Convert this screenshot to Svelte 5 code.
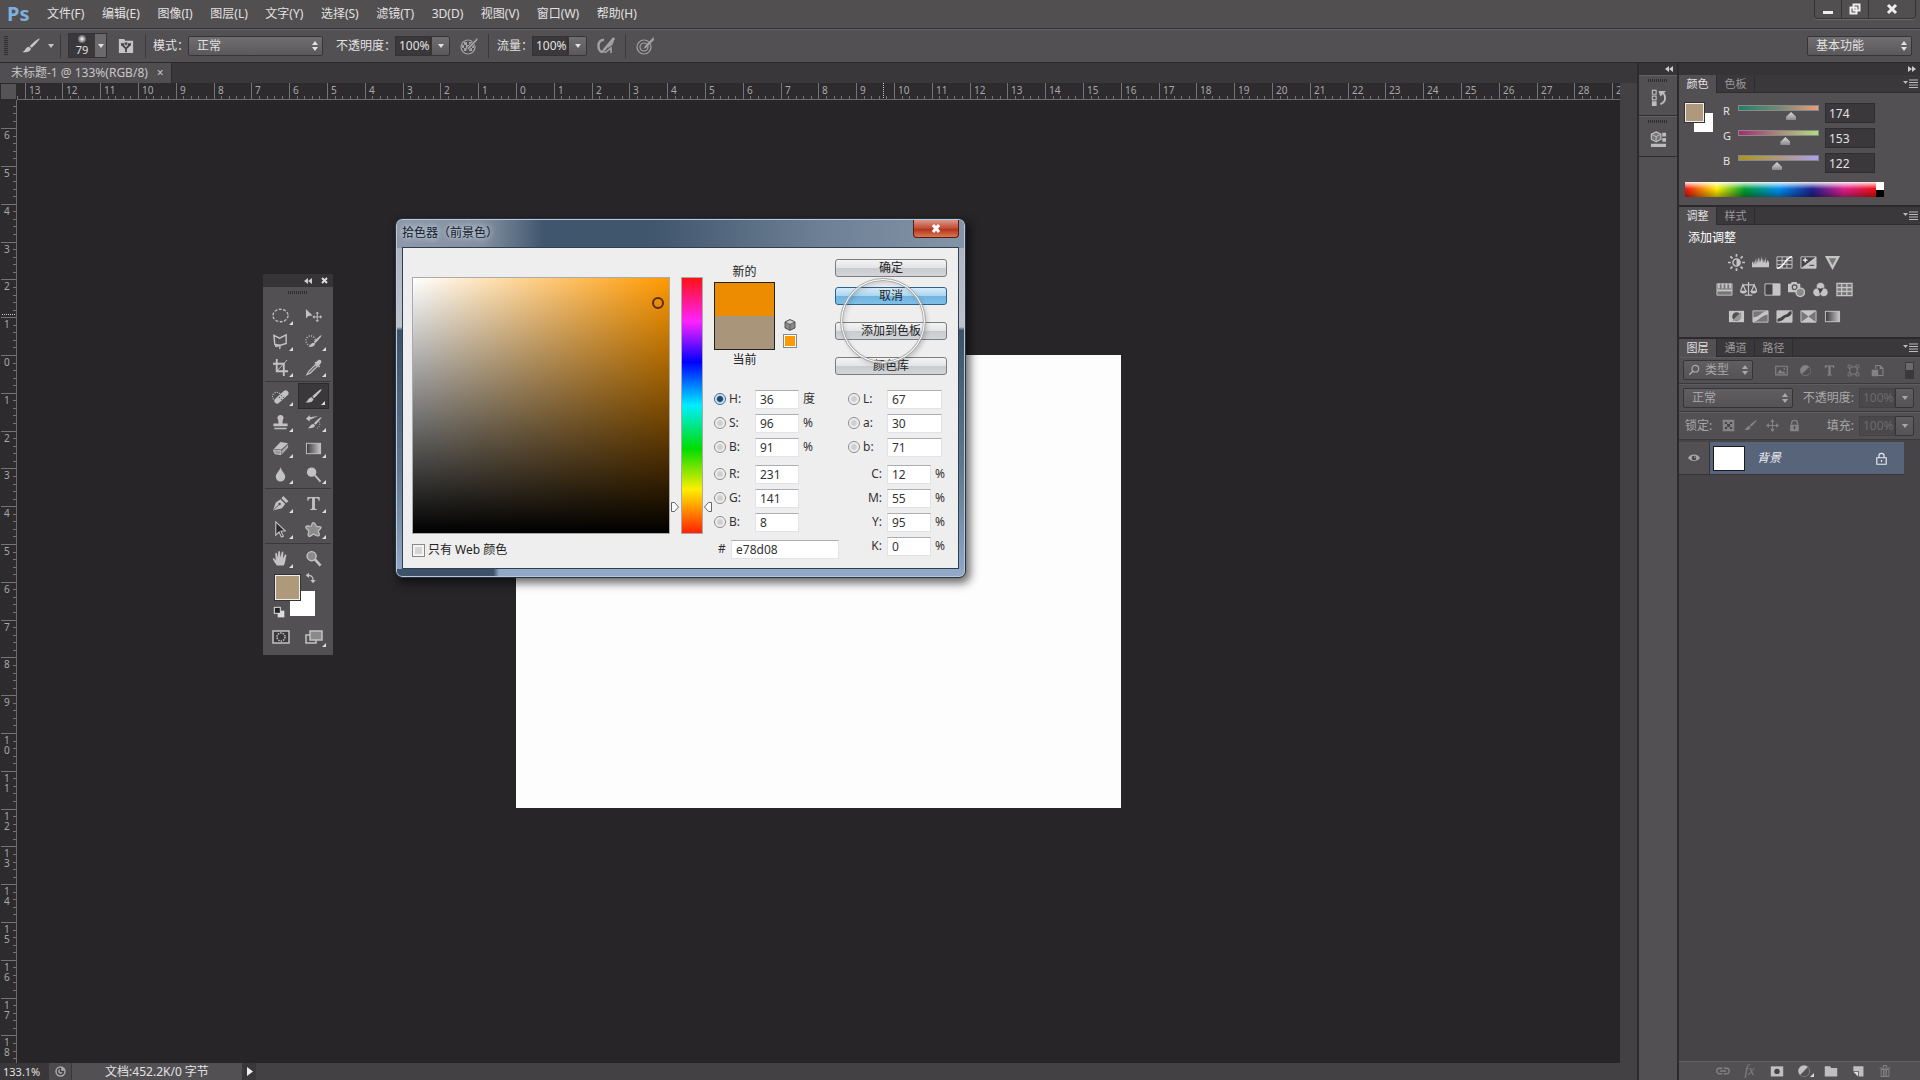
<script>
	const menus = ['文件(F)', '编辑(E)', '图像(I)', '图层(L)', '文字(Y)', '选择(S)', '滤镜(T)', '3D(D)', '视图(V)', '窗口(W)', '帮助(H)'];

	// all icons are drawn on an 18x18 grid
	const icons = {
		ellipse: '<ellipse cx="9" cy="9" rx="8" ry="6.6" fill="none" stroke="currentColor" stroke-width="1.4" stroke-dasharray="3 1.6"/>',
		move: '<path d="M1 2v10l2.6-2.4L8 9z" fill="currentColor"/><path d="M13 6v9M8.500 10.500h9" stroke="currentColor"/><path d="M13 5l-2 2h4zM13 16l-2-2h4zM8 10.500l2-2v4zM18 10.500l-2-2v4z" fill="currentColor"/>',
		lasso: '<path d="M2 2.500l6 3 7-3.500v9l-6 2-6-1zM5 12c-2 .5-1.500 3 .5 2s4-1 2.500 3" fill="none" stroke="currentColor" stroke-width="1.5"/>',
		quick: '<circle cx="6" cy="8" r="5" fill="none" stroke="currentColor" stroke-width="1.3" stroke-dasharray="1.2 1.4"/><path d="M17.500 2.500c.6.6-5 7-6.500 8.200L9.500 9.500C11 7.500 16.500 1.800 17.500 2.500zM8.800 10.200l1.700 1.400c-.6 3-4 3.500-7 3C5.500 14 6 10.500 8.800 10.200z" fill="currentColor"/>',
		crop: '<path d="M5 0v13h12M1 5h11.500v13" fill="none" stroke="currentColor" stroke-width="2"/><path d="M5 13L16 1" stroke="currentColor"/>',
		dropper: '<path d="M11 6L4 13l-2 3.500L5.500 15 13 8z" fill="#6c6a6c" stroke="currentColor" stroke-width="1.2"/><path d="M10 4l5 5 1-1-1.200-1.500C18 4 17.500 2 16.800 1.200 16 .5 14 0 12 3.200L11 3z" fill="currentColor"/>',
		heal: '<circle cx="5" cy="9" r="4.500" fill="none" stroke="currentColor" stroke-width="1.2" stroke-dasharray="1.2 1.4"/><rect x="1" y="6.500" width="18" height="6" rx="3" transform="rotate(-42 10 9.500)" fill="currentColor"/><g fill="#555"><circle cx="10" cy="8" r=".7"/><circle cx="12" cy="10" r=".7"/><circle cx="8" cy="10" r=".7"/><circle cx="10" cy="12" r=".7"/></g>',
		brush: '<path d="M17.500 1.500c.7.7-6 7.800-8 9.300L7.800 9.200C9.500 7 16.500.7 17.500 1.500zM7 9.800l2 1.800c-.6 3.600-4.500 4.200-8.500 3.400C3 14.500 3.500 10 7 9.800z" fill="currentColor"/>',
		stamp: '<path d="M9 1a3 3 0 0 1 2.500 5L11 10h5.500v3h-15v-3H7L6.500 6A3 3 0 0 1 9 1zM2.500 14.500h13v1.600h-13z" fill="currentColor"/>',
		history: '<path d="M17.500 3.500c.5.5-5 7-6.500 8L9.500 10C11 8 16.500 2.800 17.500 3.500zM8.800 10.500l1.800 1.500c-.6 3-4 3.500-8 3C5 14.500 5.500 10.800 8.800 10.500zM1 5l4-4v2.500c4-.5 6-1.500 9-.5-3 0-5 2-9 3v2z" fill="currentColor"/><path d="M15 8c1.500 3 .5 6-3 7.500" fill="none" stroke="currentColor" stroke-dasharray="1 1.400"/>',
		eraser: '<path d="M9 2l8 1.500-7 6.500-8-.5z" fill="currentColor"/><path d="M1.500 10.500l8 .8v4.200l-6.500-1z" fill="#9b9a9b" stroke="currentColor"/><path d="M10.500 11L17 4.500v3.800L10.500 15z" fill="#a9a8a9"/>',
		gradient: '<rect x="1.500" y="3.500" width="15" height="11" fill="url(#fade)" stroke="currentColor"/>',
		blur: '<path d="M9 1c.5 4 5 6.500 5 10.500a5 5 0 0 1-10 0C4 7.500 8.500 5 9 1z" fill="currentColor"/>',
		dodge: '<circle cx="7" cy="6.500" r="5" fill="currentColor"/><path d="M10.500 10l6 6.500" stroke="currentColor" stroke-width="2"/>',
		pen: '<path d="M1 16.500L4 8l5-3.500 5 5L10.500 14z" fill="currentColor"/><path d="M10 3.500l2-2.500 5.500 5.500-2.500 2z" fill="currentColor"/><path d="M1.500 16l6-6" stroke="#525053"/><circle cx="8" cy="9.500" r="1.300" fill="#525053"/>',
		type: '<path d="M2.500 2h13v4h-1c-.4-2-1-2.600-4-2.600v10.400c0 1 .6 1.200 2 1.200v1h-7v-1c1.400 0 2-.2 2-1.200V3.400c-3 0-3.600.6-4 2.600h-1z" fill="currentColor"/>',
		select: '<path d="M4 1v14l3.500-3.300L10 17l2-.9-2.500-5.200L14 10.500z" fill="#2b292b" stroke="currentColor" stroke-width="1.200"/>',
		shape: '<path d="M8 2c3-1 3 2 4 3.500s5-.5 5 1.500-3 2.500-3 4 2.500 3 .5 4.500-4-1.500-5.500-1.500-3 3-5 2 .5-4 0-5.500S0 8 1 6s4 0 5.500-.5S6.500 3 8 2z" fill="#8c8b8c" stroke="currentColor" stroke-width="1.300"/>',
		hand: '<path d="M5 16.500C3.500 13.500 1 11 0.800 9c.8-.8 2 0 3.200 2L3.500 4c0-1.300 1.500-1.300 1.800 0L6.200 8 6.600 2c.2-1.300 1.800-1.300 1.900 0L9 8l1.300-5.500c.4-1.200 2-1 1.800.3L11.500 9l2-3.800c.7-1 2-.4 1.700.7C14 10 14.500 13 12.500 16.500z" fill="currentColor"/>',
		zoom: '<circle cx="7" cy="6.500" r="4.800" fill="#8b8a8b" stroke="currentColor" stroke-width="1.500"/><path d="M10.500 10l6 6.500" stroke="currentColor" stroke-width="2.800"/>',
		swap: '<path d="M5 5c5 0 7 2 7 7" fill="none" stroke="currentColor" stroke-width="1.800"/><path d="M1 5l5-4v8zM12 17l-4-5h8z" fill="currentColor"/>',
		reset: '<rect x="7" y="7" width="10" height="10" fill="#ddd"/><rect x="2" y="2" width="9" height="9" fill="#222" stroke="#ddd" stroke-width="1.500"/>',
		mask: '<rect x="1" y="3" width="16" height="12" fill="#3a383a" stroke="currentColor" stroke-width="1.500"/><circle cx="9" cy="9" r="4" fill="none" stroke="currentColor" stroke-width="1.500" stroke-dasharray="1.500 1"/>',
		screen: '<rect x="1" y="7" width="10" height="8" fill="#525053" stroke="currentColor" stroke-width="1.500"/><rect x="5" y="3" width="12" height="9" fill="#8b8a8b" stroke="currentColor" stroke-width="1.500"/>',
		folder: '<path d="M1 1h6l1 2h9v14H1z" fill="currentColor"/><path d="M9 16V11M9 12L5 8M9 12l4-4" fill="none" stroke="#444244" stroke-width="2"/><path d="M3 6h4v3H4zM7 5h4l-2 4zM11 6h4l-1 3h-3z" fill="#444244"/>',
		pressure: '<circle cx="8" cy="10" r="7" fill="none" stroke="currentColor" stroke-width="1.200"/><path d="M4 5h3v3H4zM9 5h3v3H9zM6 8h3v3H6zM2 8h2v3H2zM4 11h3v3H4zM9 11h3v3H9zM12 8h2v3h-2z" fill="currentColor"/><path d="M17.500 0L8 10l-1.500 3.500 3-1.500L18 3z" fill="currentColor" stroke="#4c4a4c" stroke-width=".8"/>',
		airbrush: '<path d="M7 3C0 2 0 14 5 15" fill="none" stroke="currentColor" stroke-width="2.400"/><path d="M17 1l-2 6-4 3M17 1L5 15h4l5-4v5" fill="none" stroke="currentColor" stroke-width="1.600"/><path d="M17 1L7 13" stroke="currentColor" stroke-width="2.500"/>',
		sizePressure: '<circle cx="8" cy="10" r="7" fill="none" stroke="currentColor" stroke-width="1.200"/><circle cx="8" cy="10" r="4" fill="none" stroke="currentColor" stroke-width="1.200"/><path d="M17.500 0L9 9l-1.500 3 3-1.500L18 3z" fill="currentColor"/>',
		historyPanel: '<path d="M2.500 1.500h4v4h-4zM2.500 7.500h4v4h-4z" fill="none" stroke="currentColor" stroke-width="1.200"/><path d="M2 13h5v5H2z" fill="currentColor"/><path d="M11 16c6-2 6-8 3-12" fill="none" stroke="currentColor" stroke-width="2"/><path d="M9 2h8l-6 6z" fill="currentColor"/>',
		propsPanel: '<path d="M6.500 2l5 2.500v5.500l-5 2.500-5-2.500V4.500z" fill="#777" stroke="currentColor" stroke-width="1.300"/><path d="M1.500 4.500l5 2.500 5-2.500M6.500 7v5.500" fill="none" stroke="currentColor"/><path d="M13 3h4v4h-4zM13 8.500h4v4h-4zM1 14.500h16v3.500H1z" fill="currentColor"/>',
		sun: '<circle cx="9" cy="9" r="3.800" fill="none" stroke="currentColor" stroke-width="1.500"/><path d="M9 5a4 4 0 0 1 0 8z" fill="currentColor"/><path d="M9 0v3M9 15v3M0 9h3M15 9h3M2.500 2.500l2.200 2.200M13.300 13.300l2.200 2.200M2.500 15.500l2.200-2.200M13.300 4.700l2.200-2.200" stroke="currentColor" stroke-width="1.800"/>',
		levels: '<path d="M0 14V9l1-1 1 4V7l1.500 4V5L5 10V4l1.500 6V3L8 9V4l1.500 5V2L11 9V4l1.500 6V5L14 10V3l1.500 7 1-4L18 9v5z" fill="currentColor"/>',
		curves: '<path d="M1 3h16v12H1zM1 7h16M1 11h16M6.500 3v12M11.500 3v12" fill="none" stroke="currentColor"/><path d="M1 15c8 0 8-11 16-12" fill="none" stroke="#fff" stroke-width="1.600"/>',
		exposure: '<path d="M1 3h16v12H1z" fill="#444244" stroke="currentColor"/><path d="M17 3v12H1z" fill="currentColor"/><path d="M3 6.500h5M5.500 4v5" stroke="#fff" stroke-width="1.200"/><path d="M10 12h5" stroke="#333"/>',
		vibrance: '<path d="M1 2h16L9 17z" fill="currentColor"/><path d="M5 4.500h8L9 12z" fill="#777"/>',
		hue: '<path d="M1 3h16v12H1z" fill="#777" stroke="currentColor"/><path d="M3 3v5M7 3v5M11 3v5M15 3v5" stroke="currentColor" stroke-width="2"/><path d="M1 9h16v2H1z" fill="currentColor"/>',
		balance: '<path d="M9 1v14M3 4h12M5 15h8M3 4L.5 11h6zM15 4l-3 7h6z" fill="none" stroke="currentColor" stroke-width="1.300"/><path d="M0 11h7c-1 3-6 3-7 0zM11 11h7c-1 3-6 3-7 0z" fill="currentColor"/>',
		bw: '<path d="M1 3h16v12H1z" fill="#444244" stroke="currentColor"/><path d="M9 3h8v12H9z" fill="currentColor"/>',
		camera: '<path d="M0 3h3l1-2h5l1 2h3v9H0z" fill="currentColor"/><circle cx="7" cy="6.500" r="2.500" fill="none" stroke="#525053" stroke-width="1.300"/><circle cx="13" cy="12" r="4.500" fill="#8b8a8b" stroke="currentColor" stroke-width="1.500"/>',
		mixer: '<g fill="currentColor" stroke="#525053" stroke-width=".7"><circle cx="9" cy="6" r="4.500"/><circle cx="5.500" cy="12" r="4.500"/><circle cx="12.500" cy="12" r="4.500"/></g><path d="M6 8h6l-3 5z" fill="#444244"/>',
		lookup: '<path d="M1 2.500h16v13H1zM1 7h16M1 11h16M6 2.500v13M11.500 2.500v13" fill="#777" stroke="currentColor" stroke-width="1.300"/>',
		invert: '<path d="M1 3h16v12H1z" fill="currentColor"/><circle cx="9" cy="9" r="4.500" fill="#525053"/><path d="M4 14L14 4v3a5 5 0 0 1-6 6z" fill="#999"/>',
		poster: '<path d="M1 3h16v12H1z" fill="#777" stroke="currentColor"/><path d="M1 10c7 0 8-6 16-7v4c-8 1-9 7-16 8z" fill="currentColor"/>',
		threshold: '<path d="M1 3h16v12H1z" fill="#444244" stroke="currentColor"/><path d="M1 3h14l-3 3-4 2-3 2-4 2zM17 6v9H2l5-2 3-3 4-1z" fill="currentColor"/>',
		selective: '<path d="M1 3h16v12H1z" fill="#777" stroke="currentColor"/><path d="M1 3h16L9 9zM1 15h16L9 9z" fill="currentColor"/>',
		gradmap: '<rect x="1.500" y="3.500" width="15" height="11" fill="url(#fade)" stroke="currentColor"/>',
		image: '<path d="M1 3h16v12H1z" fill="none" stroke="currentColor" stroke-width="1.500"/><path d="M3 13l4-5 3 3 2-1 3 3zM12 6h2v2h-2z" fill="currentColor"/>',
		adjust: '<circle cx="9" cy="9" r="7.500" fill="currentColor"/><path d="M14 4a6.500 6.500 0 0 1-10 10z" fill="#525053"/>',
		path: '<path d="M4 4h10v10H4z" fill="none" stroke="currentColor" stroke-width="1.200"/><path d="M1.500 1.500h4v4h-4zM12.500 1.500h4v4h-4zM1.500 12.500h4v4h-4zM12.500 12.500h4v4h-4z" fill="#525053" stroke="currentColor"/>',
		smart: '<path d="M6.500 7V2h6l4 4v10H10" fill="none" stroke="currentColor" stroke-width="1.500"/><path d="M1 8h9v9H1zM12 2v5h5z" fill="currentColor"/>',
		pixels: '<path d="M1 1h16v16H1z" fill="currentColor"/><path d="M4 4h3v3H4zM11 4h3v3h-3zM7 7h4v4H7zM4 11h3v3H4zM11 11h3v3h-3z" fill="#444244"/>',
		arrows: '<path d="M9 2v14M2 9h14" stroke="currentColor" stroke-width="1.500"/><path d="M9 0L6 4h6zM9 18l-3-4h6zM0 9l4-3v6zM18 9l-4-3v6z" fill="currentColor"/>',
		lock: '<path d="M5 8V5c0-4 8-4 8 0v3" fill="none" stroke="currentColor" stroke-width="1.800"/><path d="M3 8h12v9H3z" fill="currentColor"/><path d="M9 10v4" stroke="#444244" stroke-width="2"/>',
		lockLine: '<path d="M5.500 8V5c0-4 7-4 7 0v3M2.500 8h13v9h-13zM9 11v3" fill="none" stroke="currentColor" stroke-width="1.600"/>',
		eye: '<path d="M0 9c4-7 14-7 18 0-4 6-14 6-18 0z" fill="currentColor"/><circle cx="9" cy="9" r="3.500" fill="#444244"/><circle cx="10" cy="8" r="1.200" fill="currentColor"/>',
		link: '<path d="M8 5.500H4.500a3.500 3.500 0 0 0 0 7H8M10 5.500h3.500a3.500 3.500 0 0 1 0 7H10M5 9h8" fill="none" stroke="currentColor" stroke-width="1.800"/>',
		newMask: '<path d="M1 3h16v13H1z" fill="currentColor"/><circle cx="9" cy="9.500" r="3.500" fill="#444244"/>',
		group: '<path d="M1 3h7l1 2h8v11H1z" fill="currentColor"/>',
		newLayer: '<path d="M3 3h13v13h-6V9H3z" fill="currentColor"/><path d="M3 10h6v6z" fill="#ddd"/>',
		trash: '<path d="M2 5h14M7 4V2h4v2M4 7h10v9H4zM7 7v9M9 7v9M11 7v9" fill="none" stroke="currentColor" stroke-width="1.300"/>',
		search: '<circle cx="11" cy="7" r="5" fill="none" stroke="currentColor" stroke-width="1.800"/><path d="M7.500 10.500L2 16" stroke="currentColor" stroke-width="2.200"/>',
		cube: '<path d="M9 1l7.500 3.500v9L9 17l-7.500-3.500v-9z" fill="#8a8a8a" stroke="#444" stroke-width="1.300"/><path d="M9 1l7.500 3.500L9 8 1.500 4.500z" fill="#d0d0d0" stroke="#444"/><path d="M9 8v9" stroke="#444"/>',
		sync: '<circle cx="9" cy="9" r="8.500" fill="#aaa9aa"/><path d="M9 4a5 5 0 1 0 5 5H9z" fill="none" stroke="#444244" stroke-width="2.200"/>',
	};

	const toolGroups = [
		[['ellipse', '椭圆选框工具'], ['move', '移动工具'], ['lasso', '多边形套索工具'], ['quick', '快速选择工具'], ['crop', '裁剪工具'], ['dropper', '吸管工具']],
		[['heal', '污点修复画笔工具'], ['brush', '画笔工具'], ['stamp', '仿制图章工具'], ['history', '历史记录画笔工具'], ['eraser', '橡皮擦工具'], ['gradient', '渐变工具'], ['blur', '模糊工具'], ['dodge', '减淡工具']],
		[['pen', '钢笔工具'], ['type', '横排文字工具'], ['select', '直接选择工具'], ['shape', '自定形状工具']],
		[['hand', '抓手工具'], ['zoom', '缩放工具']],
	];
	const flat = ['move', 'zoom', 'mask'];
	let activeTool = $state('brush');

	const adjustments = [
		['sun', 'levels', 'curves', 'exposure', 'vibrance'],
		['hue', 'balance', 'bw', 'camera', 'mixer', 'lookup'],
		['invert', 'poster', 'threshold', 'selective', 'gradmap'],
	];

	let rgb = $state([
		{ name: 'R', value: 174 },
		{ name: 'G', value: 153 },
		{ name: 'B', value: 122 },
	]);

	let mode = $state('H');
	let hex = $state('e78d08');
	const leftFields = [
		[{ name: 'H', value: 36, unit: '度' }, { name: 'S', value: 96, unit: '%' }, { name: 'B', value: 91, unit: '%' }],
		[{ name: 'R', value: 231, unit: '' }, { name: 'G', value: 141, unit: '' }, { name: 'B', id: 'blue', value: 8, unit: '' }],
	];
	const labFields = [{ name: 'L', value: 67 }, { name: 'a', value: 30 }, { name: 'b', id: 'lab-b', value: 71 }];
	const cmykFields = [{ name: 'C', value: 12 }, { name: 'M', value: 55 }, { name: 'Y', value: 95 }, { name: 'K', value: 0 }];

	// ruler: one unit in pixels, split in five
	const unit = 37.8;
	let stageWidth = $state(0);
	let stageHeight = $state(0);

	function ticks(length, zero) {
		const list = [];
		const first = Math.ceil((-zero * 5) / unit);
		for (let i = first; zero + (i * unit) / 5 < length; i++) {
			const major = i % 5 === 0;
			list.push({ pos: Math.round(zero + (i * unit) / 5), major, label: major ? String(Math.abs(i / 5)) : '' });
		}
		return list;
	}
	const across = $derived(ticks(stageWidth, 499));
	const down = $derived(ticks(stageHeight, 255));
</script>

{#snippet icon(name, size = 18)}
	<svg class="icon" width={size} height={size} viewBox="0 0 18 18" aria-hidden="true">{@html icons[name]}</svg>
{/snippet}

{#snippet updown()}
	<svg class="updown" width="6" height="10" viewBox="0 0 6 10" aria-hidden="true"><path d="M0 4l3-4 3 4zM0 6h6l-3 4z" fill="currentColor" /></svg>
{/snippet}

{#snippet caret()}
	<svg class="caret" width="6" height="4" viewBox="0 0 6 4" aria-hidden="true"><path d="M0 0h6L3 4z" fill="currentColor" /></svg>
{/snippet}

{#snippet percent(label)}
	<label class="percent">
		<span>{label}</span>
		<input type="text" value="100%" />
	</label>
	<button class="drop" aria-label={label}>{@render caret()}</button>
{/snippet}

{#snippet tabs(names)}
	<div class="tabs">
		{#each names as name, i}
			<button class:current={i === 0}>{name}</button>
		{/each}
		<button class="panel-menu" aria-label="面板菜单">
			<svg width="15" height="9" viewBox="0 0 15 9"><path d="M0 2h5L2.500 5z" fill="currentColor" /><path d="M6 1h9M6 3.500h9M6 6h9M6 8.500h9" stroke="currentColor" /></svg>
		</button>
	</div>
{/snippet}

<svg class="defs" width="0" height="0" aria-hidden="true">
	<defs>
		<linearGradient id="fade"><stop offset="0" stop-color="#3a383a" /><stop offset="1" stop-color="#c8c7c8" /></linearGradient>
	</defs>
</svg>

<div class="app">
	<header class="menubar">
		<span class="logo">Ps</span>
		<nav>
			{#each menus as menu}
				<button>{menu}</button>
			{/each}
		</nav>
		<div class="window-buttons">
			<button aria-label="最小化"><svg width="12" height="12" viewBox="0 0 12 12"><path d="M1 8h10v3H1z" fill="#eee" /></svg></button>
			<button aria-label="还原"><svg width="12" height="12" viewBox="0 0 12 12"><path d="M4.500 1.500h6v6h-6zM1.500 4.500h6v6h-6z" fill="none" stroke="#eee" stroke-width="2" /></svg></button>
			<button class="wide" aria-label="关闭"><svg width="12" height="12" viewBox="0 0 12 12"><path d="M2 2l8 8M10 2l-8 8" stroke="#eee" stroke-width="3" /></svg></button>
		</div>
	</header>

	<div class="options">
		<span class="grip"></span>
		<button class="current-tool" aria-label="画笔工具">{@render icon('brush', 18)}{@render caret()}</button>
		<span class="divider"></span>
		<button class="brush-size"><span class="tip"><i></i>79</span><span class="open">{@render caret()}</span></button>
		<button class="brush-panel" aria-label="切换画笔面板">{@render icon('folder', 16)}</button>
		<span class="divider"></span>
		<label class="mode" for="mode">模式：</label>
		<div class="select blend">
			<select id="mode"><option>正常</option></select>
			{@render updown()}
		</div>
		<div class="percent-group">{@render percent('不透明度：')}</div>
		<button class="dim" aria-label="不透明度压力">{@render icon('pressure', 18)}</button>
		<span class="divider"></span>
		<div class="percent-group flow">{@render percent('流量：')}</div>
		<button class="dim" aria-label="喷枪">{@render icon('airbrush', 18)}</button>
		<span class="divider"></span>
		<button class="dim" aria-label="大小压力">{@render icon('sizePressure', 18)}</button>
		<div class="select workspace">
			<select aria-label="工作区"><option>基本功能</option></select>
			{@render updown()}
		</div>
	</div>

	<div class="work">
		<main>
			<div class="doc-tabs">
				<div class="doc-tab">未标题-1 @ 133%(RGB/8)<button aria-label="关闭文档">×</button></div>
			</div>
			<div class="editor">
				<div class="corner"></div>
				<svg class="ruler-x" height="17" width="100%">
					{#each across as t}
						<line x1={t.pos} x2={t.pos} y1={t.major ? 0 : 13} y2="17" />
						{#if t.major}<text x={t.pos + 4} y="11">{t.label}</text>{/if}
					{/each}
					<line class="cursor" x1="866" x2="866" y1="0" y2="17" />
				</svg>
				<div class="scroll-v"></div>
				<svg class="ruler-y" width="17" height="100%">
					{#each down as t}
						<line y1={t.pos} y2={t.pos} x1={t.major ? 1 : 13} x2="17" />
						{#each t.label as digit, i}
							<text x="4" y={t.pos + 11 + i * 10}>{digit}</text>
						{/each}
					{/each}
					<line class="cursor" x1="2" x2="17" y1="214" y2="214" />
				</svg>
				<div class="stage" bind:clientWidth={stageWidth} bind:clientHeight={stageHeight}><div class="paper"></div></div>
			</div>
			<footer class="status">
				<input type="text" value="133.1%" aria-label="缩放比例" />
				<span class="sync">{@render icon('sync', 11)}</span>
				<span class="doc-size">文档:452.2K/0 字节</span>
				<button aria-label="文档信息"><svg width="6" height="9" viewBox="0 0 6 9"><path d="M0 0l6 4.500L0 9z" fill="#eee" /></svg></button>
			</footer>
		</main>

		<aside class="mini-dock">
			<div class="dock-head"><svg width="8" height="6" viewBox="0 0 8 6"><path d="M4 0v6L0 3zM8 0v6L4 3z" fill="#ccc" /></svg></div>
			<div class="mini"><span class="grip-h"></span><button aria-label="历史记录">{@render icon('historyPanel', 17)}</button></div>
			<div class="mini"><span class="grip-h"></span><button aria-label="属性">{@render icon('propsPanel', 17)}</button></div>
		</aside>

		<aside class="panels">
			<div class="dock-head"><svg width="8" height="6" viewBox="0 0 8 6"><path d="M0 0v6l4-3zM4 0v6l4-3z" fill="#ccc" /></svg></div>
			<section class="panel">
				{@render tabs(['颜色', '色板'])}
				<div class="color-body">
					<div class="pair small"><span class="bg"></span><span class="fg"></span></div>
					<div class="sliders">
						{#each rgb as c}
							<div class="slider-row">
								<label for="rgb-{c.name}">{c.name}</label>
								<input class={c.name} type="range" min="0" max="255" id="rgb-{c.name}" bind:value={c.value} />
								<input type="text" bind:value={c.value} aria-label={c.name} />
							</div>
						{/each}
					</div>
					<div class="spectrum"><i></i></div>
				</div>
			</section>

			<section class="panel">
				{@render tabs(['调整', '样式'])}
				<div class="adjust-body">
					<p>添加调整</p>
					{#each adjustments as row}
						<div class="adjust-row">
							{#each row as name}
								<button aria-label={name}>{@render icon(name, 17)}</button>
							{/each}
						</div>
					{/each}
				</div>
			</section>

			<section class="panel layers">
				{@render tabs(['图层', '通道', '路径'])}
				<div class="layer-row filter">
					<div class="select kind">
						{@render icon('search', 12)}
						<select aria-label="过滤类型"><option>类型</option></select>
						{@render updown()}
					</div>
					<div class="filters">
						{#each ['image', 'adjust', 'type', 'path', 'smart'] as name}
							<button aria-label={name}>{@render icon(name, 13)}</button>
						{/each}
					</div>
					<span class="toggle"></span>
				</div>
				<div class="layer-row">
					<div class="select blending">
						<select aria-label="混合模式"><option>正常</option></select>
						{@render updown()}
					</div>
					<div class="percent-group">{@render percent('不透明度:')}</div>
				</div>
				<div class="layer-row">
					<span class="lock-label">锁定:</span>
					<div class="locks">
						{#each ['pixels', 'brush', 'arrows', 'lock'] as name}
							<button aria-label={name}>{@render icon(name, 13)}</button>
						{/each}
					</div>
					<div class="percent-group">{@render percent('填充:')}</div>
				</div>
				<div class="layer-list">
					<div class="layer">
						<button class="eye" aria-label="可见性">{@render icon('eye', 12)}</button>
						<div class="layer-main">
							<span class="thumb"></span>
							<em>背景</em>
							{@render icon('lockLine', 13)}
						</div>
					</div>
				</div>
				<div class="layer-foot">
					<button class="off" aria-label="链接图层">{@render icon('link', 14)}</button>
					<button class="off fx">fx</button>
					{#each ['newMask', 'adjust', 'group', 'newLayer'] as name}
						<button class:more={name === 'adjust'} aria-label={name}>{@render icon(name, 14)}</button>
					{/each}
					<button class="off" aria-label="删除">{@render icon('trash', 14)}</button>
				</div>
			</section>
		</aside>
	</div>

	<div class="toolbox">
		<div class="toolbox-head">
			<svg width="8" height="6" viewBox="0 0 8 6"><path d="M4 0v6L0 3zM8 0v6L4 3z" fill="#ccc" /></svg>
			<svg width="7" height="7" viewBox="0 0 7 7"><path d="M1 1l5 5M6 1L1 6" stroke="#ddd" stroke-width="2" /></svg>
		</div>
		<span class="grip-h"></span>
		{#each toolGroups as group}
			<div class="tools">
				{#each group as [name, title]}
					<button class:active={activeTool === name} class:more={!flat.includes(name)} aria-label={title} onclick={() => (activeTool = name)}>
						{@render icon(name, 17)}
					</button>
				{/each}
			</div>
		{/each}
		<div class="pair large">
			<span class="bg"></span><span class="fg"></span>
			<span class="swap">{@render icon('swap', 12)}</span>
			<span class="reset">{@render icon('reset', 12)}</span>
		</div>
		<div class="tools bottom">
			<button aria-label="快速蒙版">{@render icon('mask', 18)}</button>
			<button class="more" aria-label="屏幕模式">{@render icon('screen', 18)}</button>
		</div>
	</div>

	<div class="dialog" role="dialog" aria-label="拾色器（前景色）">
		<div class="title">
			<span>拾色器（前景色）</span>
			<button aria-label="关闭"><svg width="10" height="9" viewBox="0 0 10 9"><path d="M2 1l6 7M8 1L2 8" stroke="#fff" stroke-width="3" /></svg></button>
		</div>
		<div class="body">
			<div class="pick">
				<div class="pick-row">
					<div class="field"><span class="ring"></span></div>
					<div class="hue">
						<svg class="mark left" width="8" height="10" viewBox="0 0 8 10"><path d="M.5.500h3l4 4.500-4 4.500h-3z" fill="#fff" stroke="#666" /></svg>
						<svg class="mark right" width="8" height="10" viewBox="0 0 8 10"><path d="M7.500.500h-3L.5 5l4 4.500h3z" fill="#fff" stroke="#666" /></svg>
					</div>
				</div>
				<label class="web"><input type="checkbox" />只有 Web 颜色</label>
			</div>
			<div class="values">
				<div class="top">
					<div class="compare">
						<span>新的</span>
						<div class="swatch"><i></i></div>
						<span>当前</span>
					</div>
					<div class="warn">{@render icon('cube', 12)}<i></i></div>
					<div class="actions">
						<button>确定</button>
						<button class="hot">取消</button>
						<button>添加到色板</button>
						<button>颜色库</button>
					</div>
				</div>
				<div class="fields">
					<div class="col">
						{#each leftFields as group}
							<div class="group">
								{#each group as f}
									<div class="row">
										<label><input type="radio" name="channel" value={f.id ?? f.name} bind:group={mode} />{f.name}:</label>
										<input type="text" value={f.value} aria-label={f.name} />
										<span>{f.unit}</span>
									</div>
								{/each}
							</div>
						{/each}
						<div class="row hex"><label for="hex">#</label><input type="text" id="hex" bind:value={hex} /></div>
					</div>
					<div class="col right">
						<div class="group">
							{#each labFields as f}
								<div class="row lab">
									<label><input type="radio" name="channel" value={f.id ?? f.name} bind:group={mode} />{f.name}:</label>
									<input type="text" value={f.value} aria-label={f.name} />
								</div>
							{/each}
						</div>
						<div class="group">
							{#each cmykFields as f}
								<div class="row cmyk">
									<label for="cmyk-{f.name}">{f.name}:</label>
									<input type="text" id="cmyk-{f.name}" value={f.value} />
									<span>%</span>
								</div>
							{/each}
						</div>
					</div>
				</div>
			</div>
		</div>
		<div class="click-ring"></div>
	</div>
</div>

<style>
	:global(body) {
		background: #272528;
	}

	.app {
		position: relative;
		display: flex;
		flex-direction: column;
		height: 100vh;
		overflow: hidden;
		font-family: "Noto Sans", "Noto Sans CJK SC", sans-serif;
		font-size: 12px;
		line-height: 16px;
		color: #e2e1e2;
	}

	.app *, .app *::before, .app *::after {
		box-sizing: border-box;
	}

	.defs {
		position: absolute;
	}

	button, input, select {
		font: inherit;
		color: inherit;
		margin: 0;
		padding: 0;
		border: 0;
		border-radius: 0;
		background: none;
	}

	button {
		display: flex;
		align-items: center;
		justify-content: center;
	}

	input[type="text"] {
		min-width: 0;
	}

	svg {
		display: block;
		flex: none;
	}

	/* menu bar */
	.menubar {
		display: flex;
		align-items: center;
		height: 28px;
		padding-left: 7px;
		background: #524f50;
	}

	.logo {
		width: 32px;
		font-size: 20px;
		font-weight: bold;
		color: #7fb0dd;
	}

	.menubar nav {
		display: flex;
		justify-content: space-between;
		width: 606px;
	}

	.menubar nav button {
		padding: 0 8px;
	}

	.window-buttons {
		display: flex;
		align-self: flex-start;
		margin-left: auto;
		margin-right: 4px;
		border: 1px solid #343234;
		border-top: 0;
		border-radius: 0 0 4px 4px;
		box-shadow: 0 1px #6a686a;
	}

	.window-buttons button {
		width: 27px;
		height: 18px;
		border-right: 1px solid #343234;
	}

	.window-buttons .wide {
		width: 46px;
		border-right: 0;
	}

	/* options bar */
	.options {
		display: flex;
		align-items: center;
		height: 35px;
		padding: 0 8px 0 4px;
		border-top: 1px solid #343234;
		border-bottom: 1px solid #2c2a2c;
		box-shadow: inset 0 1px #626062;
		background: #525053;
	}

	.grip {
		width: 4px;
		height: 20px;
		background: repeating-linear-gradient(#2f2d2f 0 1px, transparent 1px 2px);
	}

	.grip-h {
		display: block;
		width: 20px;
		height: 3px;
		margin: 0 auto;
		background: repeating-linear-gradient(90deg, #2f2d2f 0 1px, transparent 1px 2px);
	}

	.divider {
		width: 1px;
		height: 24px;
		background: #3b393b;
	}

	.current-tool {
		gap: 8px;
		width: 52px;
		padding-left: 8px;
		color: #c6c5c6;
	}

	.brush-size {
		height: 25px;
		margin-left: 7px;
		border: 1px solid #343234;
		background: #3a383a;
	}

	.tip {
		display: flex;
		flex-direction: column;
		align-items: center;
		width: 26px;
		font-size: 11px;
		line-height: 13px;
	}

	.tip i {
		width: 8px;
		height: 8px;
		border-radius: 50%;
		background: radial-gradient(#fff, #777 60%, transparent);
	}

	.open {
		display: flex;
		align-items: center;
		justify-content: center;
		width: 11px;
		height: 23px;
		background: #6b696b;
	}

	.brush-panel {
		width: 38px;
		color: #c6c5c6;
	}

	.mode {
		width: 42px;
		padding-left: 7px;
		white-space: nowrap;
	}

	.select {
		display: flex;
		align-items: center;
		height: 20px;
		padding: 0 4px 0 8px;
		border: 1px solid #363436;
		border-radius: 2px;
		background: linear-gradient(#706e70, #5a585a);
	}

	.select select {
		flex: 1;
		min-width: 0;
		appearance: none;
		outline: 0;
	}

	.blend {
		width: 135px;
	}

	.percent-group {
		display: flex;
		align-items: center;
	}

	.options .percent-group {
		margin-left: 13px;
	}

	.options .flow {
		margin-left: 8px;
	}

	.percent {
		display: flex;
		align-items: center;
	}

	.options .percent span {
		width: 59px;
		white-space: nowrap;
	}

	.options .flow .percent span {
		width: 35px;
	}

	.percent input {
		width: 36px;
		height: 20px;
		padding-left: 3px;
		border: 1px solid #343234;
		background: #3a383a;
	}

	.drop {
		width: 19px;
		height: 20px;
		border: 1px solid #363436;
		border-radius: 0 2px 2px 0;
		background: linear-gradient(#706e70, #5a585a);
	}

	.dim {
		width: 38px;
		color: #a3a2a3;
	}

	.workspace {
		width: 105px;
		margin-left: auto;
	}

	/* document area */
	.work {
		display: flex;
		flex: 1;
		min-height: 0;
		background: #2c2a2c;
	}

	main {
		display: flex;
		flex: 1;
		flex-direction: column;
		min-width: 0;
	}

	.doc-tabs {
		display: flex;
		height: 20px;
		background: #39373a;
	}

	.doc-tab {
		display: flex;
		align-items: center;
		gap: 9px;
		padding: 0 7px 0 11px;
		border-right: 1px solid #2c2a2c;
		background: #504e50;
		color: #c8c7c8;
	}

	.editor {
		display: grid;
		flex: 1;
		grid-template-columns: 17px 1fr 17px;
		grid-template-rows: 17px 1fr;
		min-height: 0;
		overflow: hidden;
	}

	.corner {
		background: #555356;
		border: 1px solid #2c2a2c;
	}

	.ruler-x, .ruler-y {
		background: #2d2b2e;
		overflow: hidden;
	}

	.ruler-x {
		border-bottom: 1px solid #6d6b6d;
	}

	.ruler-y {
		border-right: 1px solid #6d6b6d;
	}

	.ruler-x line, .ruler-y line {
		stroke: #757375;
		shape-rendering: crispEdges;
	}

	.ruler-x .cursor, .ruler-y .cursor {
		stroke: #ccc;
		stroke-dasharray: 1 1;
	}

	.ruler-x text, .ruler-y text {
		fill: #a9a8a9;
		font-size: 10px;
	}

	.scroll-v {
		grid-row: 1 / 3;
		grid-column: 3;
		background: #434144;
	}

	.ruler-y {
		grid-row: 2;
		grid-column: 1;
	}

	.stage {
		position: relative;
		grid-row: 2;
		grid-column: 2;
		overflow: hidden;
		background: #272528;
	}

	.paper {
		position: absolute;
		left: 499px;
		top: 255px;
		width: 605px;
		height: 453px;
		background: #fdfdfd;
	}

	.status {
		display: flex;
		height: 17px;
		background: #434144;
	}

	.status input {
		width: 49px;
		padding-left: 3px;
		background: #39373a;
		font-size: 11px;
	}

	.sync, .doc-size {
		display: flex;
		align-items: center;
		justify-content: center;
		border-right: 1px solid #39373a;
		background: #4c4a4d;
	}

	.sync {
		width: 23px;
	}

	.doc-size {
		width: 171px;
		background: #525053;
	}

	.status button {
		width: 13px;
		background: #39373a;
	}

	/* docks */
	.dock-head {
		display: flex;
		align-items: center;
		justify-content: flex-end;
		height: 12px;
		padding-right: 4px;
		background: #363436;
	}

	.mini-dock {
		width: 38px;
		margin: 0 2px;
		background: #525053;
	}

	.mini {
		display: flex;
		flex-direction: column;
		height: 41px;
		padding-top: 4px;
		border-bottom: 1px solid #2f2d2f;
		box-shadow: inset 0 1px #646264;
		color: #bdbcbd;
	}

	.mini button {
		flex: 1;
		padding-bottom: 2px;
	}

	.panels {
		display: flex;
		flex-direction: column;
		width: 241px;
		gap: 2px;
	}

	.panels .dock-head {
		margin-bottom: -2px;
	}

	.panel {
		background: #525053;
	}

	.tabs {
		display: flex;
		height: 18px;
		border-bottom: 1px solid #2f2d2f;
		background: #3a383b;
	}

	.tabs button {
		width: 38px;
		border-right: 1px solid #2f2d2f;
		color: #9a999a;
		font-size: 11px;
	}

	.tabs .current {
		height: 18px;
		background: #525053;
		color: #e2e1e2;
	}

	.tabs .panel-menu {
		width: 20px;
		margin-left: auto;
		border: 0;
		color: #bbb;
	}

	.color-body {
		display: grid;
		grid-template-columns: 32px 1fr;
		height: 112px;
		padding: 10px 0 0 6px;
	}

	.pair {
		display: grid;
		position: relative;
	}

	.pair .fg, .pair .bg {
		grid-area: 1 / 1;
	}

	.pair .fg {
		border: 1px solid #eee;
		background: #ae997a;
		outline: 1px solid #333;
	}

	.pair .bg {
		justify-self: end;
		align-self: end;
		background: #fff;
	}

	.small {
		width: 28px;
		height: 29px;
	}

	.small .fg, .small .bg {
		width: 19px;
		height: 19px;
	}

	.sliders {
		display: flex;
		flex-direction: column;
		gap: 5px;
		padding-left: 6px;
	}

	.slider-row {
		display: flex;
		height: 20px;
	}

	.slider-row label {
		width: 15px;
		font-size: 11px;
	}

	.slider-row input[type="text"] {
		width: 50px;
		height: 20px;
		margin-left: 6px;
		padding-left: 3px;
		border: 1px solid #2f2d2f;
		background: #3a383a;
	}

	input[type="range"] {
		width: 81px;
		height: 18px;
		appearance: none;
	}

	input[type="range"]::-webkit-slider-runnable-track {
		height: 6px;
		margin-bottom: 8px;
		border: 1px solid #888;
		background: var(--track);
	}

	input[type="range"]::-webkit-slider-thumb {
		width: 10px;
		height: 8px;
		margin-top: 6px;
		appearance: none;
		background: linear-gradient(#ddd, #888);
		clip-path: polygon(50% 0, 100% 60%, 100% 100%, 0 100%, 0 60%);
	}

	.R {
		--track: linear-gradient(90deg, #1f8067, #6f8b76, #f09a7c);
	}

	.G {
		--track: linear-gradient(90deg, #a52a72, #aa887a, #aee07c);
	}

	.B {
		--track: linear-gradient(90deg, #ae9420, #ad997c, #aea0f0);
	}

	.spectrum {
		grid-column: 1 / 3;
		width: 199px;
		height: 15px;
		margin-top: 1px;
		background:
			linear-gradient(rgba(255, 255, 255, 0.9), transparent 45%, rgba(0, 0, 0, 0.35)),
			linear-gradient(90deg, #f01010, #fff000 16%, #00a030 30%, #0090f0 47%, #202090 64%, #e0208c 80%, #f01010 96%);
	}

	.spectrum i {
		display: block;
		width: 8px;
		height: 15px;
		margin-left: auto;
		background: linear-gradient(#fff 50%, #000 50%);
	}

	.adjust-body {
		height: 112px;
		padding: 5px 0 0 9px;
		color: #c6c5c6;
	}

	.adjust-body p {
		margin: 0 0 3px;
		color: #fff;
	}

	.adjust-row {
		display: flex;
		justify-content: center;
		width: 144px;
		height: 27px;
		margin-left: 24px;
	}

	.adjust-row button {
		width: 24px;
	}

	.layers {
		display: flex;
		flex: 1;
		flex-direction: column;
		color: #a9a8a9;
	}

	.layer-row {
		display: flex;
		align-items: center;
		height: 28px;
		padding: 0 6px 0 4px;
		border-bottom: 1px solid #3b393b;
		box-shadow: inset 0 1px #5e5c5e;
	}

	.layer-row.filter {
		height: 27px;
	}

	.layer-row .select, .layer-row .drop {
		background: linear-gradient(#605e60, #555355);
	}

	.kind {
		width: 70px;
		padding: 0 4px;
	}

	.kind select {
		padding-left: 5px;
	}

	.filters {
		display: flex;
		margin-left: 16px;
	}

	.filters button {
		width: 24px;
	}

	.filters, .locks {
		color: #858485;
	}

	.toggle {
		width: 9px;
		height: 17px;
		margin-left: auto;
		border: 1px solid #3b393b;
		background: linear-gradient(#6b696b 45%, #3a383a 45%);
	}

	.blending {
		width: 110px;
	}

	.layer-row .percent-group {
		margin-left: auto;
	}

	.layer-row .percent span {
		margin-right: 5px;
	}

	.layer-row .percent input {
		background: #4a484a;
		border-color: #444244;
		color: #6d6b6d;
	}

	.lock-label {
		width: 34px;
		padding-left: 2px;
	}

	.locks {
		display: flex;
	}

	.locks button {
		width: 22px;
	}

	.layer-list {
		flex: 1;
		padding: 2px 16px 0 0;
		background: #464447;
	}

	.layer {
		display: flex;
		height: 33px;
		border-bottom: 1px solid #353335;
	}

	.eye {
		width: 31px;
		border-right: 1px solid #353335;
		background: #525053;
	}

	.layer-main {
		display: flex;
		flex: 1;
		align-items: center;
		padding: 0 16px 0 3px;
		background: #58647a;
		color: #e8ebf0;
	}

	.thumb {
		width: 32px;
		height: 25px;
		border: 1px solid #1a1a22;
		background: #fff;
	}

	.layer-main em {
		flex: 1;
		margin-left: 12px;
		font-size: 12px;
	}

	.layer-foot {
		display: flex;
		height: 19px;
		padding-left: 30px;
		box-shadow: inset 0 1px #646264;
		color: #c0bfc0;
	}

	.layer-foot button {
		position: relative;
		width: 27px;
	}

	.layer-foot .off {
		color: #828082;
	}

	.layer-foot .fx {
		font-style: italic;
		font-family: "Liberation Serif", serif;
		font-size: 14px;
	}

	/* floating toolbox */
	.toolbox {
		position: absolute;
		left: 263px;
		top: 274px;
		width: 70px;
		padding-bottom: 5px;
		border-radius: 3px 3px 0 0;
		background: #525053;
		color: #c3c2c3;
	}

	.toolbox-head {
		display: flex;
		align-items: center;
		justify-content: flex-end;
		gap: 9px;
		height: 13px;
		padding-right: 5px;
		border-radius: 3px 3px 0 0;
		background: #363436;
	}

	.toolbox > .grip-h {
		margin: 4px auto 8px;
	}

	.tools {
		display: grid;
		grid-template-columns: 31px 31px;
		gap: 0 2px;
		margin: 0 2px;
	}

	.tools + .tools {
		margin-top: 1px;
		padding-top: 1px;
		border-top: 1px solid #3b393b;
	}

	.tools button {
		position: relative;
		height: 26px;
	}

	.tools .active {
		border: 1px solid #2c2a2c;
		background: #3a383a;
	}

	.more::after {
		content: "";
		position: absolute;
		right: 3px;
		bottom: 3px;
		border: 2px solid;
		border-color: transparent #ddd #ddd transparent;
	}

	.large {
		width: 40px;
		height: 41px;
		margin: 4px 0 8px 12px;
	}

	.large .fg, .large .bg {
		width: 25px;
		height: 25px;
	}

	.swap {
		position: absolute;
		left: 30px;
		top: -3px;
	}

	.reset {
		position: absolute;
		left: -2px;
		top: 31px;
	}

	/* color picker */
	.dialog {
		position: absolute;
		left: 396px;
		top: 219px;
		width: 569px;
		padding: 0 5px 7px;
		border: 1px solid #b8c8d8;
		border-radius: 6px;
		outline: 1px solid #26323f;
		background:
			linear-gradient(90deg, #8d98a8, #8490a0 15%, #3f566e 26%, #40566c 45%, #6d8096 75%, #8494a6) top / 100% 28px no-repeat,
			linear-gradient(90deg, #3d5268 17%, #91a9c6 18%) bottom / 100% 7px no-repeat,
			linear-gradient(#a8b0bc, #bcc2cc 30%, #3d5268 31%, #5f7890 70%, #91a9c6);
		box-shadow: 3px 4px 10px 2px rgba(0, 0, 0, 0.6);
		color: #222;
	}

	.title {
		display: flex;
		align-items: center;
		justify-content: space-between;
		height: 27px;
		padding-bottom: 2px;
		color: #15202c;
		text-shadow: 0 0 6px #c8d4e2, 0 0 6px #c8d4e2;
	}

	.title button {
		align-self: flex-start;
		width: 46px;
		height: 18px;
		border: 1px solid #5a1a14;
		border-top: 0;
		border-radius: 0 0 4px 4px;
		background: linear-gradient(#d99a8c, #c0492f 50%, #b03018 52%, #d87850);
	}

	.body {
		display: flex;
		height: 322px;
		padding: 0 11px 0 9px;
		border: 1px solid #2e3f50;
		background: #efeeef;
	}

	.pick {
		flex: none;
		width: 302px;
		padding-top: 29px;
	}

	.pick-row {
		display: flex;
		gap: 11px;
	}

	.field {
		position: relative;
		width: 258px;
		height: 257px;
		border: 1px solid #aaa;
		background: linear-gradient(transparent, #000), linear-gradient(90deg, #fff, #ff9900);
	}

	.ring {
		position: absolute;
		left: 239px;
		top: 19px;
		width: 12px;
		height: 12px;
		border: 2px solid #5a2c10;
		border-radius: 50%;
	}

	.hue {
		position: relative;
		width: 22px;
		height: 257px;
		border: 1px solid #aaa;
		background: linear-gradient(#f11, #f2f 17%, #00f 33%, #0ef 50%, #0d0 67%, #fe0 83%, #f20);
	}

	.mark {
		position: absolute;
		top: 224px;
	}

	.mark.left {
		left: -11px;
	}

	.mark.right {
		left: 22px;
	}

	.web {
		display: flex;
		align-items: center;
		gap: 3px;
		height: 32px;
	}

	.web input {
		width: 13px;
		height: 13px;
		appearance: none;
		border: 1px solid #888;
		box-shadow: inset 0 0 0 2px #f4f4f4;
		background: #d5d5d8;
	}

	.values {
		flex: 1;
		min-width: 0;
	}

	.top {
		display: flex;
		height: 139px;
	}

	.compare {
		display: flex;
		flex-direction: column;
		align-items: center;
		width: 61px;
		padding-top: 16px;
		gap: 2px;
	}

	.swatch {
		width: 61px;
		height: 68px;
		border: 1px solid #222;
		background: #a9967a;
	}

	.swatch i {
		display: block;
		height: 33px;
		background: #ee8c00;
	}

	.warn {
		display: flex;
		flex-direction: column;
		align-items: center;
		gap: 3px;
		width: 14px;
		margin-left: 8px;
		padding-top: 71px;
	}

	.warn i {
		width: 14px;
		height: 14px;
		border: 1px solid #888;
		box-shadow: inset 0 0 0 1px #fff;
		background: #ff9900;
	}

	.actions {
		display: flex;
		flex-direction: column;
		gap: 17px;
		margin-left: auto;
		padding-top: 11px;
	}

	.actions button {
		width: 112px;
		height: 18px;
		border: 1px solid #7b7c7e;
		border-radius: 3px;
		background: linear-gradient(#f4f4f4, #e2e3e6 50%, #c9cbd0 52%, #d4d5d8);
	}

	.actions .hot {
		margin-top: -7px;
		border-color: #2c628b;
		background: linear-gradient(#d6ecfa, #a9d5f0 50%, #72b4e0 52%, #7fc0e8);
	}

	.fields {
		display: flex;
	}

	.col {
		width: 134px;
	}

	.right {
		flex: 1;
		min-width: 0;
	}

	.group + .group {
		margin-top: 3px;
	}

	.row {
		display: flex;
		align-items: center;
		height: 24px;
		color: #333;
	}

	.row label {
		display: flex;
		align-items: center;
		gap: 3px;
		width: 41px;
	}

	.row input[type="text"] {
		width: 44px;
		height: 19px;
		margin-right: 4px;
		padding-left: 4px;
		border: 1px solid #e2e3ea;
		border-top-color: #abadb3;
		background: #fff;
	}

	.hex {
		margin-top: 3px;
	}

	.row.hex label {
		width: 17px;
		padding-left: 4px;
	}

	.row.hex input[type="text"] {
		width: 108px;
	}

	.row.lab label {
		width: 39px;
	}

	.row.lab input[type="text"] {
		width: 55px;
	}

	.row.cmyk label {
		justify-content: flex-end;
		width: 39px;
		padding-right: 5px;
	}

	.row input[type="radio"] {
		width: 12px;
		height: 12px;
		appearance: none;
		border: 1px solid #8a8a8a;
		border-radius: 50%;
		background: radial-gradient(#cfcfd2 30%, #f4f4f4 60%);
	}

	.row input[type="radio"]:checked {
		border-color: #3c6a90;
		background: radial-gradient(#1c4a72 35%, #d8eaf6 55%);
	}

	.click-ring {
		position: absolute;
		left: 444px;
		top: 59px;
		width: 84px;
		height: 84px;
		border: 1px solid #fff;
		border-radius: 50%;
		outline: 1px solid #aaa;
		box-shadow: inset 0 0 0 1px #aaa, 2px 3px 5px rgba(0, 0, 0, 0.2), inset 2px 3px 5px rgba(0, 0, 0, 0.15);
		pointer-events: none;
	}
</style>
